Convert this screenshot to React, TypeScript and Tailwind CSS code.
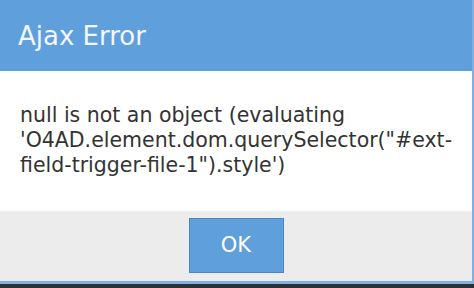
export default function App() {
  return (
    <div className="w-[474px] h-[288px] flex flex-col bg-[#2b3037] overflow-hidden" style={{ fontFamily: '"DejaVu Sans", Verdana, sans-serif' }}>
      <div className="h-[284px] flex flex-col border-r-[2px] border-b-[3px] border-[#7fb0e0]">
        <div className="h-[71px] shrink-0 bg-[#5f9fdc] pl-[18px] pt-[21px]">
          <div className="text-[26px] leading-[30px] text-[#f4f7fb]">Ajax Error</div>
        </div>
        <div className="h-[140px] shrink-0 bg-white pl-[20px] pt-[32px]">
          <p className="text-[20.5px] leading-[25px] text-[#333333] whitespace-nowrap">
            null is not an object (evaluating
            <br />
            'O4AD.element.dom.querySelector("#ext-
            <br />
            field-trigger-file-1").style')
          </p>
        </div>
        <div className="flex-1 bg-[#ececec] flex justify-center pt-[7px]">
          <button className="w-[95px] h-[55px] bg-[#5e9fdc] border border-[#4b84bf] text-white text-[21px] leading-none">
            OK
          </button>
        </div>
      </div>
    </div>
  );
}
